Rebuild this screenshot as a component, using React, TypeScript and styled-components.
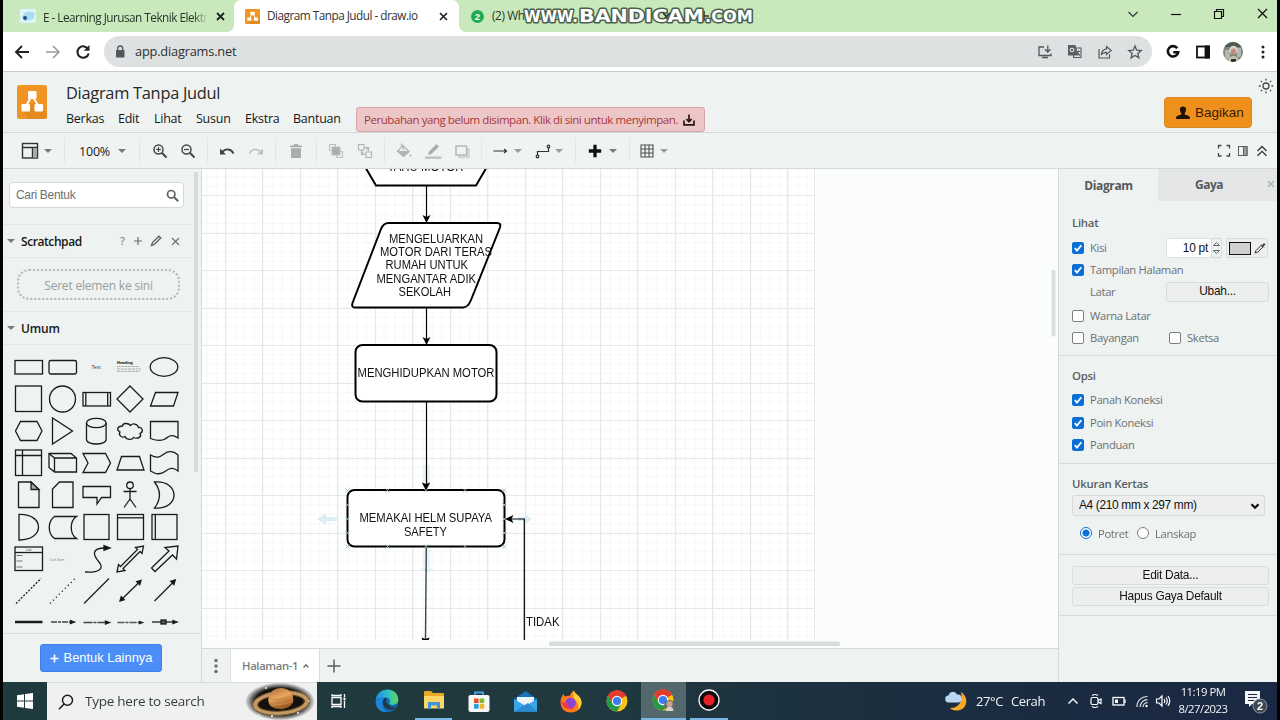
import React from 'react';
import styled, { createGlobalStyle } from 'styled-components';

const UI = `"Open Sans", "Noto Sans", sans-serif`;
const ARIAL = `"Liberation Sans", Arial, sans-serif`;

const Global = createGlobalStyle`
  * { box-sizing: border-box; }
  body { margin: 0; background: #000; overflow: hidden; font-family: ${UI}; }
  svg { display: block; flex: none; }
`;

const Screen = styled.div`
  position: relative;
  width: 1280px;
  height: 720px;
  padding: 0 3px;
  background: #000;
  display: flex;
  flex-direction: column;
  overflow: hidden;
`;

const Label = styled.span<{ $w?: number; $s?: number; $ls?: number; $c?: string; $b?: number; $g?: number; $f?: string; $mt?: number }>`
  flex: none;
  ${p => (p.$w ? `width: ${p.$w}px;` : '')}
  margin-left: ${p => p.$g ?? 0}px;
  margin-top: ${p => p.$mt ?? 0}px;
  font-family: ${p => p.$f ?? UI};
  font-size: ${p => p.$s ?? 12}px;
  letter-spacing: ${p => p.$ls ?? 0}px;
  font-weight: ${p => p.$b ?? 400};
  color: ${p => p.$c ?? '#1c1f1f'};
  white-space: nowrap;
  line-height: 1.3;
`;

const Cell = styled.div<{ $g?: number; $w?: number; $up?: number }>`
  flex: none;
  width: ${p => p.$w ?? 18}px;
  margin-left: ${p => p.$g ?? 0}px;
  margin-bottom: ${p => p.$up ?? 0}px;
  display: flex;
  align-items: center;
  justify-content: center;
`;

/* ---------- browser chrome ---------- */
const TabStrip = styled.div`
  flex: none;
  height: 32px;
  display: flex;
  background: #c9e9bd;
`;
const TabBack = styled.div<{ $w: number; $side: 'left' | 'right' }>`
  width: ${p => p.$w}px;
  background: #fff;
  > div {
    height: 32px;
    display: flex;
    align-items: center;
    background: #c9e9bd;
    border-bottom-${p => (p.$side === 'left' ? 'right' : 'left')}-radius: 7px;
  }
`;
const ActiveTab = styled.div`
  width: 225px;
  background: #c9e9bd;
  > div {
    height: 32px;
    display: flex;
    align-items: center;
    background: #fff;
    border-radius: 7px 7px 0 0;
  }
`;
const Fade = styled.div`
  width: 167px;
  margin-left: 7px;
  overflow: hidden;
  mask-image: linear-gradient(to right, #000 90%, transparent 99%);
`;
const AddressRow = styled.div`
  flex: none;
  height: 40px;
  display: flex;
  align-items: center;
  background: #fff;
  border-bottom: 1px solid #c5cccb;
`;
const Omnibox = styled.div`
  width: 1048px;
  height: 31px;
  margin-left: 12px;
  padding-right: 8px;
  border-radius: 16px;
  background: #dee1e1;
  display: flex;
  align-items: center;
`;

/* ---------- draw.io header ---------- */
const Header = styled.div`
  flex: none;
  height: 61px;
  display: flex;
  background: #eef2f1;
  border-bottom: 1px solid #d5dad9;
`;
const Logo = styled.div`
  margin: 13px 0 0 14px;
  width: 30px;
  height: 34px;
`;
const TitleBlock = styled.div`
  margin: 9px 0 0 19px;
  width: 290px;
`;
const TitleLine = styled.div`
  height: 23px;
  display: flex;
  align-items: center;
`;
const MenuLine = styled.div`
  height: 31px;
  display: flex;
  align-items: center;
`;
const SaveNotice = styled.div`
  width: 349px;
  height: 25px;
  margin-top: 35px;
  padding-left: 7px;
  display: flex;
  align-items: center;
  background: #edc6c8;
  border: 1px solid #d6a3a6;
  border-radius: 3px;
`;
const ShareButton = styled.div`
  margin: 25px 0 0 459px;
  width: 88px;
  height: 31px;
  padding: 1px 0 0 11px;
  display: flex;
  align-items: center;
  background: #f0901c;
  border: 1px solid #d88a2b;
  border-radius: 4px;
`;
const SunSlot = styled.div`
  margin: 6px 0 0 6px;
`;

const Toolbar = styled.div`
  flex: none;
  height: 36px;
  display: flex;
  align-items: center;
  background: #eff3f2;
  border-bottom: 1px solid #d3d8d7;
  padding-right: 6px;
`;
const Sep = styled.div<{ $g: number }>`
  flex: none;
  width: 1px;
  height: 25px;
  margin-left: ${p => p.$g}px;
  background: #e3e7e6;
`;
const Caret = styled.div<{ $g?: number; $c?: string }>`
  flex: none;
  margin-left: ${p => p.$g ?? 0}px;
  border: 4px solid transparent;
  border-top: 4.5px solid ${p => p.$c ?? '#777b7b'};
  border-bottom: 0;
`;
const Spacer = styled.div`
  flex: 1;
`;

/* ---------- main body ---------- */
const Body = styled.div`
  flex: none;
  height: 513px;
  display: flex;
  background: #eef2f1;
`;
const Sidebar = styled.div`
  width: 199px;
  border-right: 1px solid #d5dad9;
  display: flex;
  flex-direction: column;
`;
const SideScroll = styled.div`
  height: 465px;
  display: flex;
  border-bottom: 1px solid #d9dedd;
  overflow: hidden;
`;
const SideContent = styled.div`
  width: 188px;
`;
const SideThumb = styled.div`
  width: 4px;
  height: 300px;
  margin: 3px 0 0 3px;
  background: #d6dada;
`;
const SearchBox = styled.div`
  margin: 13px 0 0 6px;
  width: 175px;
  height: 26px;
  padding: 1px 4px 0 6px;
  display: flex;
  align-items: center;
  justify-content: space-between;
  background: #fff;
  border: 1px solid #d3d7d7;
  border-radius: 4px;
`;
const SideTitle = styled.div<{ $mt: number }>`
  height: 34px;
  margin-top: ${p => p.$mt}px;
  padding-left: 4px;
  display: flex;
  align-items: center;
  border-top: 1px solid #e3e7e6;
  border-bottom: 1px solid #e3e7e6;
`;
const DropHere = styled.div`
  margin: 11px 0 0 14px;
  width: 163px;
  height: 31px;
  padding-top: 2px;
  display: flex;
  align-items: center;
  justify-content: center;
  border: 2px dotted #b4b8b8;
  border-radius: 12px;
`;
const ShapeGrid = styled.div`
  margin: 6px 0 0 8px;
  display: grid;
  grid-template-columns: repeat(5, 34px);
  grid-auto-rows: 32px;
`;
const MoreShapes = styled.div`
  margin: 10px 0 0 37px;
  width: 122px;
  height: 28px;
  display: flex;
  align-items: center;
  justify-content: center;
  background: #4b8ef8;
  border: 1px solid #4180e2;
  border-radius: 3px;
`;

const Center = styled.div`
  width: 856px;
  display: flex;
  flex-direction: column;
`;
const CanvasArea = styled.div`
  height: 480px;
  background: #fbfcfc;
  border-bottom: 1px solid #d5dad9;
`;
const PageBar = styled.div`
  height: 33px;
  display: flex;
  align-items: center;
`;
const PageTab = styled.div`
  height: 33px;
  width: 90px;
  margin-left: 10px;
  padding-left: 11px;
  display: flex;
  align-items: center;
  background: #fff;
  border-left: 1px solid #d9dedd;
  border-right: 1px solid #d9dedd;
`;

const Panel = styled.div`
  width: 219px;
  border-left: 1px solid #d5dad9;
`;
const PanelTabs = styled.div`
  height: 32px;
  display: flex;
`;
const PanelTab = styled.div<{ $w: number; $idle?: boolean }>`
  width: ${p => p.$w}px;
  padding-top: ${p => (p.$idle ? 0 : 2)}px;
  display: flex;
  align-items: center;
  justify-content: center;
  background: ${p => (p.$idle ? '#e4e7e6' : 'transparent')};
`;
const PanelClose = styled.div`
  width: 17px;
  padding: 0 0 3px 7px;
  background: #e4e7e6;
  display: flex;
  align-items: center;
`;
const Section = styled.div<{ $h: number; $pt: number }>`
  height: ${p => p.$h}px;
  padding: ${p => p.$pt}px 0 0 13px;
  border-bottom: 1px solid #d7dcdb;
`;
const Row = styled.div<{ $h: number }>`
  height: ${p => p.$h}px;
  display: flex;
  align-items: center;
`;
const Box = styled.div<{ $on?: boolean }>`
  flex: none;
  width: 12px;
  height: 12px;
  border-radius: 2px;
  background: ${p => (p.$on ? '#0c6fd6' : '#fff')};
  border: 1px solid ${p => (p.$on ? '#0c6fd6' : '#7b7f80')};
`;
const Radio = styled.div<{ $on?: boolean; $g: number }>`
  flex: none;
  width: 12px;
  height: 12px;
  margin: 0 0 3px ${p => p.$g}px;
  border-radius: 50%;
  border: 1px solid ${p => (p.$on ? '#0c6fd6' : '#7b7f80')};
  background: ${p => (p.$on ? 'radial-gradient(#0c6fd6 0 3.2px, #fff 3.9px)' : '#fff')};
`;
const Button = styled.div<{ $w: number; $h: number; $mb?: number }>`
  flex: none;
  width: ${p => p.$w}px;
  height: ${p => p.$h}px;
  margin-bottom: ${p => p.$mb ?? 0}px;
  display: flex;
  align-items: center;
  justify-content: center;
  background: #ecefee;
  border: 1px solid #d8dcdc;
  border-radius: 3px;
`;
const NumberInput = styled.div`
  width: 46px;
  height: 20px;
  display: flex;
  align-items: center;
  justify-content: flex-end;
  padding: 1px 3px 0 0;
  background: #fff;
  border: 1px solid #dde1e0;
  border-radius: 3px;
`;
const Stepper = styled.div`
  width: 11px;
  height: 20px;
  margin: 0 4px 0 -1px;
  border: 1px solid #d8dcdc;
  border-radius: 2px;
  display: flex;
  align-items: center;
  justify-content: center;
`;
const Swatch = styled.div`
  width: 22px;
  height: 13px;
  margin-right: 3px;
  background: #cfcfcf;
  border: 1px solid #111;
`;
const Select = styled.div`
  width: 193px;
  height: 21px;
  padding: 1px 4px 0 6px;
  display: flex;
  align-items: center;
  justify-content: space-between;
  background: #ecefee;
  border: 1px solid #d6dada;
  border-radius: 3px;
`;

/* ---------- taskbar ---------- */
const Taskbar = styled.div`
  flex: none;
  height: 38px;
  display: flex;
  align-items: center;
  background: linear-gradient(to right, #1f3a3f 0, #20393f 45%, #1b2e3f 70%, #1a2843 100%);
`;
const SearchField = styled.div`
  width: 270px;
  height: 38px;
  display: flex;
  align-items: center;
  background: #eff0f0;
  border-top: 1px solid #d8dcdc;
`;
const AppSlot = styled.div<{ $w: number; $g?: number; $active?: boolean; $open?: boolean }>`
  flex: none;
  width: ${p => p.$w}px;
  height: 38px;
  margin-left: ${p => p.$g ?? 0}px;
  display: flex;
  align-items: center;
  justify-content: center;
  background: ${p => (p.$active ? '#53686d' : 'transparent')};
  border-bottom: ${p => (p.$open ? '2px solid #79b7e6' : '0')};
`;
const Clock = styled.div`
  width: 56px;
  margin-left: 3px;
  display: flex;
  flex-direction: column;
  align-items: center;
  gap: 2px;
`;
const Watermark = styled.div`
  position: absolute;
  left: 518px;
  top: 3px;
`;

const Ic = ({ w = 18, h, children, sw = 1.3, c = '#333' }: { w?: number; h?: number; children: React.ReactNode; sw?: number; c?: string }) => (
  <svg width={w} height={h ?? w} viewBox={`0 0 ${w} ${h ?? w}`} fill="none" stroke={c} strokeWidth={sw}>{children}</svg>
);

const DrawioMark = ({ w, h }: { w: number; h: number }) => (
  <svg width={w} height={h} viewBox="0 0 30 34" preserveAspectRatio="none">
    <rect width="30" height="34" rx="2.500" fill="#f09423" />
    <path d="M18 17L30 28v3.500a2.500 2.500 0 0 1-2.500 2.500H12L5 26z" fill="#dd831b" opacity="0.6" />
    <path d="M14 12L8.500 22M16 12l6 10" stroke="#fff" strokeWidth="2" />
    <rect x="11" y="6" width="8.500" height="8" rx="1.200" fill="#fff" />
    <rect x="4.500" y="19" width="8.500" height="7.500" rx="1.200" fill="#fff" />
    <rect x="17.500" y="19" width="8.500" height="7.500" rx="1.200" fill="#fff" />
  </svg>
);

const Check = ({ on }: { on?: boolean }) => (
  <Box $on={on}>
    {on && <Ic w={10} sw={1.8} c="#fff"><path d="M1.800 5.200L4 7.600 8.300 2.200" /></Ic>}
  </Box>
);

const Close = ({ w = 10, sw = 1.6, c = '#1d2420' }: { w?: number; sw?: number; c?: string }) => (
  <Ic w={w} sw={sw} c={c}><path d={`M1 1L${w - 1} ${w - 1}M${w - 1} 1L1 ${w - 1}`} /></Ic>
);

const Option = ({ children, w }: { children: string; w?: number }) => (
  <Label $g={6} $w={w} $s={11.2} $ls={-0.3} $c="#6c7071" $mt={1}>{children}</Label>
);
const Heading = ({ children }: { children: string }) => (
  <Label $s={11.4} $b={600} $ls={-0.25} $c="#5a5e5f">{children}</Label>
);
const Control = ({ children }: { children: string }) => (
  <Label $f={ARIAL} $s={11.9} $ls={-0.25} $c="#111">{children}</Label>
);

/* ---------- shape palette, each drawn in a 34 x 32 cell ---------- */
const tiny = { fontFamily: ARIAL, stroke: 'none', fill: '#444' } as const;
const shapes: React.ReactNode[] = [
  <rect x="4" y="9.500" width="27.500" height="13.500" />,
  <rect x="4" y="9.500" width="27.500" height="13.500" rx="1.800" />,
  <text x="12.500" y="18" fontSize="5" {...tiny}>Text</text>,
  <g><text x="4" y="13" fontSize="4" fontWeight="700" {...tiny} fill="#000">Heading</text><path d="M4 15.500h22M4 18h24M4 20.300h23" stroke="#999" strokeWidth="0.800" strokeDasharray="3 0.700" /></g>,
  <ellipse cx="17" cy="16" rx="13.800" ry="9.300" />,
  <rect x="4.500" y="3" width="26" height="25.500" />,
  <circle cx="17.500" cy="16" r="13" />,
  <g><rect x="4" y="9.500" width="27.500" height="13.500" /><path d="M6.800 9.500V23M28.700 9.500V23" /></g>,
  <path d="M17 3l13 13-13 13L4 16z" />,
  <path d="M8.500 9.500h22.500L26.500 23H3.500z" />,
  <path d="M9.500 6.500h16.500l5 9.500-5 9.500H9.500L4.500 16z" />,
  <path d="M7.500 3v26l20-13z" />,
  <g><ellipse cx="17.300" cy="8" rx="9.800" ry="4.700" /><path d="M7.500 8v16.500c0 6 19.600 6 19.600 0V8" /></g>,
  <path d="M9.500 11c-5 0-6.500 4-2.500 6-2 3 2 6.500 5 4.500 2 4 7.500 3.500 8.500 1 5 2 8.500-1 6.500-4 4-2 2.500-6.500-1.500-6-1-4-6-4.500-8-2-2.500-3-8-2.500-8 .5z" />,
  <path d="M3.500 6.500H31V23c-7-4.500-9-1.500-13 1s-9 1.500-14.500-.5z" />,
  <g><rect x="4.500" y="3" width="26" height="25.500" /><path d="M11.500 3v25.500M4.500 8.500h26" /></g>,
  <g><path d="M4 6.500h22l5.500 4.500v14H9.500L4 20.500zM4 6.500l5.500 4.500h22M9.500 11v14" /></g>,
  <path d="M4 6.500h22.500l5 9.500-5 9.500H4L9 16z" />,
  <path d="M8.500 9.500h18L31 23H4z" />,
  <path d="M3.500 8c6 3.500 9 2.500 13.500-1S27 4 31 8v16c-5-4-8.500-3-13 .500s-9 3-14.500-.5z" />,
  <g><path d="M7.500 3H20l8 7.500v18H7.500z" /><path d="M20 3v7.500h8z" fill="#aaa" /></g>,
  <path d="M14.500 3H28v25.500H7.500V10z" />,
  <path d="M4 7.500h27.500v11H22.500L18 25v-6.500H4z" />,
  <g><circle cx="17" cy="6.300" r="3.300" /><path d="M17 9.500V20M10.500 12.500h13M17 20l-6 8.500M17 20l6 8.500" /></g>,
  <path d="M7.500 3c26-2 26 28 0 26 6.500-8.500 6.500-17.500 0-26z" />,
  <path d="M8 3.500c26-1 26 26 0 25.500z" />,
  <path d="M9.500 5.500h22c-7 4.500-7 17.500 0 22h-22c-7-5-7-17 0-22z" />,
  <rect x="5" y="3.500" width="25" height="25" />,
  <g><rect x="4.500" y="3.500" width="26" height="25" /><path d="M4.500 6.800h26" /></g>,
  <g><rect x="5" y="3.500" width="25" height="25" /><path d="M8.300 3.500v25" /></g>,
  <g><rect x="4" y="4" width="27.500" height="23.500" /><path d="M4 9.500h27.500" /><text x="15" y="8" fontSize="3.500" {...tiny}>List</text><path d="M5.500 12.500h6M5.500 18h6M5.500 24h6" stroke="#777" strokeWidth="1" /></g>,
  <text x="5" y="17.500" fontSize="3.800" {...tiny} fill="#888">List Item</text>,
  <g><path d="M6 29c13 1 20-3 14-10s-8-14 6-14" /><path d="M25 2.700l6 2.300-6 2.300z" fill="#111" /></g>,
  <path d="M4 29l1.500-7.500 2 2L24.500 6.500l-2-2L30.500 3 29 10.500l-2-2L10 25.500l2 2z" />,
  <path d="M4.500 25L22 8l-4-3.500L31 3l-1.500 13-4-4L8 28.500z" />,
  <path d="M5 28.500L30 3.500" strokeDasharray="2 1.500" />,
  <path d="M5 28.500L30 3.500" strokeDasharray="1.200 3" />,
  <path d="M5 28.500L30 3.500" />,
  <g><path d="M8 25L27 6.500" /><path d="M7 26l1.200-4.300 3 3zM28 5.500l-4.300 1.200 3 3z" fill="#111" /></g>,
  <g><path d="M7.500 26L27 6.500" /><path d="M28.300 5l-4.600 1.300 3.200 3.200z" fill="#111" /></g>,
  <path d="M4 15h27.500" strokeWidth="2.500" />,
  <g><path d="M6 15h22" strokeDasharray="6 1 3 1" strokeWidth="1.300" stroke="#444" /><path d="M25.500 13.500l4 1.500-4 1.500z" fill="#111" /></g>,
  <g><path d="M4.500 15.500h24" strokeDasharray="9 1 3 1" strokeWidth="1.300" stroke="#444" /><path d="M26.500 14l4 1.500-4 1.500z" fill="#111" /></g>,
  <g><path d="M4.500 15.500h24" strokeDasharray="7 1 3 1" strokeWidth="1.300" stroke="#555" /><path d="M26.500 14.500l3 1-3 1z" fill="#111" /></g>,
  <g><path d="M5 15h23" strokeWidth="1.300" /><path d="M26 13.500l4 1.500-4 1.500z" fill="#111" /><rect x="14" y="13" width="5" height="4" fill="#555" /></g>,
];

/* ---------- diagram canvas, in screen coordinates through its viewBox ---------- */
const seq = (from: number, to: number, step: number) => {
  const out: number[] = [];
  for (let v = from; v < to; v += step) out.push(v);
  return out;
};
const nodeText: [string, number, number, number][] = [
  ['TAHU MOTOR', 387.5, 171, 76],
  ['MENGELUARKAN', 389, 243, 94],
  ['MOTOR DARI TERAS', 380, 256, 112],
  ['RUMAH UNTUK', 385.500, 269.300, 82.500],
  ['MENGANTAR ADIK', 376.500, 283, 99.500],
  ['SEKOLAH', 398.500, 296.300, 52.500],
  ['MENGHIDUPKAN MOTOR', 357.500, 377, 137],
  ['MEMAKAI HELM SUPAYA', 359.500, 522.300, 132.500],
  ['SAFETY', 404, 536, 43],
  ['TIDAK', 526, 625.500, 33.500],
];
const points: [number, number][] = [
  [347.500, 490.500], [387.500, 490.500], [426, 490.500], [465, 490.500], [504, 490.500],
  [347.500, 505], [347.500, 519], [347.500, 533], [504, 505], [504, 519], [504, 533],
  [347.500, 546.500], [387.500, 546.500], [426, 546.500], [465, 546.500], [504, 546.500],
];
const Canvas = () => (
  <svg width="856" height="479" viewBox="202 169 856 479">
    <defs>
      <clipPath id="sheet"><rect x="202" y="169" width="856" height="470.500" /></clipPath>
    </defs>
    <g clipPath="url(#sheet)">
      <rect x="202" y="169" width="613" height="471" fill="#fff" />
      <g stroke="#f6f7f7" strokeWidth="1">
        {seq(207.250, 815, 9.375).map(x => <path key={x} d={`M${x} 169V640`} />)}
        {seq(176.750, 640, 9.375).map(y => <path key={y} d={`M202 ${y}H815`} />)}
      </g>
      <g stroke="#e6e8e9" strokeWidth="1">
        {seq(226, 800, 37.500).map(x => <path key={x} d={`M${Math.floor(x) - 0.5} 169V640`} />)}
        {seq(195.500, 640, 37.500).map(y => <path key={y} d={`M202 ${Math.floor(y) + 0.5}H815`} />)}
        <path d="M814.500 169V640" />
      </g>
      <g fill="#cfe8f3" opacity="0.75">
        <path d="M317 519l9-6v4h11v4h-11v4zM532 519l-7-5v3h-7v4h7v3z" />
        <path d="M423 465h7v22h-7zM423 550h7v18h3l-6 6-6-6h2z" opacity="0.600" />
      </g>
      <g fill="#fff" stroke="#000" strokeWidth="2">
        <path d="M364 165l12 20.500h100L488 165z" />
        <path d="M388.500 223H497q4.500 0 3 4.500L471 300q-3 7.500-8 7.500H355q-4 0-2.500-4.500L381 229q2.500-6 7.500-6z" />
        <rect x="355.500" y="345" width="141" height="56.500" rx="7" />
        <rect x="347.500" y="490" width="157" height="56.500" rx="7" />
      </g>
      <g fill="none" stroke="#000" strokeWidth="1">
        <path d="M426.500 186v32M426.500 308v31M426.500 402v83M524.300 640V519H510" strokeWidth="1.200" />
        <path d="M426.300 547L425.500 640" stroke="#33494a" strokeWidth="1.400" />
      </g>
      <g fill="#000">
        <path d="M426.500 223l-4-8 4 2 4-2zM426.500 345l-4-8 4 2 4-2zM426 490.500l-4.200-8 4.200 1.500 4.200-1.500zM505 519l8.500-4-2 4 2 4zM421.500 637.500l4 1.500 4-1.500-1 3h-6z" />
      </g>
      <g stroke="#9dbfc3" strokeWidth="0.900">
        {points.map(([x, y]) => <path key={`${x}-${y}`} d={`M${x - 2} ${y - 2}l4 4M${x + 2} ${y - 2}l-4 4`} />)}
      </g>
      <g fontFamily={ARIAL} fontSize="11.900" fill="#111">
        {nodeText.map(([t, x, y, w]) => <text key={t} x={x} y={y} textLength={w} lengthAdjust="spacingAndGlyphs">{t}</text>)}
      </g>
    </g>
    <rect x="549" y="641.500" width="291" height="4.500" rx="1.500" fill="#dadddd" />
    <rect x="1051.500" y="270" width="4" height="66.500" rx="1.500" fill="#dcdfdf" />
  </svg>
);

const ChromeLogo = () => (
  <svg width="22" height="22" viewBox="-11 -11 22 22">
    <circle r="10.500" fill="#fbc116" />
    <path d="M0 0L-9.100-5.200A10.500 10.500 0 0 1 9.100-5.200z" fill="#e33b2e" />
    <path d="M0-5.200H9.100A10.500 10.500 0 0 0-9.100-5.200L-4.500 2.600z" fill="#e33b2e" />
    <path d="M-9.100-5.200A10.500 10.500 0 0 0 0 10.500L4.500 2.600-4.500 2.600z" fill="#249a48" />
    <circle r="5.200" fill="#fff" />
    <circle r="4.100" fill="#3b7ded" />
  </svg>
);

const Saturn = () => (
  <svg width="70" height="37" viewBox="0 0 70 37">
    <defs>
      <radialGradient id="halo"><stop offset="0.700" stopColor="#14110e" /><stop offset="1" stopColor="#14110e" stopOpacity="0" /></radialGradient>
      <linearGradient id="globe" x1="0" y1="0" x2="0.300" y2="1"><stop offset="0" stopColor="#a96a35" /><stop offset="0.500" stopColor="#e9a65c" /><stop offset="1" stopColor="#9a5a28" /></linearGradient>
    </defs>
    <ellipse cx="35" cy="18.500" rx="35" ry="19" fill="url(#halo)" />
    <g transform="rotate(-5 36 19)">
      <ellipse cx="36" cy="20" rx="26" ry="10" fill="none" stroke="#c29a63" strokeWidth="4.500" />
      <ellipse cx="36" cy="20" rx="28.500" ry="12" fill="none" stroke="#7b5c38" strokeWidth="1" />
      <ellipse cx="36" cy="20" rx="23" ry="8" fill="none" stroke="#59401f" strokeWidth="1" />
      <path d="M23.500 17c0-16 25-16 25 0 0 12-25 12-25 0z" fill="url(#globe)" />
      <path d="M23.500 14c8 3 17 3 25 0M24.500 19c7 3 16 3 23.500 0" stroke="#c98446" fill="none" />
    </g>
    <g fill="#fff"><circle cx="21" cy="5" r="0.900" /><circle cx="14" cy="32" r="0.800" /><circle cx="27" cy="33" r="1" /><circle cx="53" cy="30" r="0.900" /><circle cx="64" cy="18" r="0.700" /></g>
  </svg>
);

const Lens = ({ plus }: { plus: boolean }) => (
  <Ic sw={1.5} c="#444848"><circle cx="7.500" cy="7.500" r="4.500" /><path d="M10.800 10.800L15.500 15.500" strokeWidth="2" /><path d={plus ? 'M5 7.500h5M7.500 5v5' : 'M5 7.500h5'} strokeWidth="1.200" /></Ic>
);

const menus: [string, number][] = [['Berkas', 52], ['Edit', 36], ['Lihat', 42], ['Susun', 49], ['Ekstra', 48], ['Bantuan', 50]];

export default function App() {
  return (
    <Screen>
      <Global />
      <TabStrip>
        <TabBack $w={231} $side="left"><div>
          <Cell $g={17} $w={16}><svg width="16" height="14" viewBox="0 0 16 14"><rect width="16" height="14" rx="1" fill="#dff3fa" /><path d="M2 8c3-6 9-7 13-3l-2 5-8 2z" fill="#a9dcee" /><circle cx="5" cy="9" r="2" fill="#20508c" /></svg></Cell>
          <Fade><Label $s={11.8} $ls={-0.53} $c="#26352a">E - Learning Jurusan Teknik Elektro</Label></Fade>
          <Cell $g={2} $w={16}><Close w={9} sw={1.8} /></Cell>
        </div></TabBack>
        <ActiveTab><div>
          <Cell $g={10} $w={16}><DrawioMark w={15} h={15} /></Cell>
          <Label $g={7} $w={168} $s={11.8} $ls={-0.52} $c="#333">Diagram Tanpa Judul - draw.io</Label>
          <Cell $g={0} $w={16}><Close w={9} /></Cell>
        </div></ActiveTab>
        <TabBack $w={818} $side="right"><div>
          <Cell $g={12} $w={12}><svg width="13" height="13" viewBox="0 0 13 13"><circle cx="6.500" cy="6.500" r="6.500" fill="#1faa52" /><text x="6.500" y="10" textAnchor="middle" fontFamily={ARIAL} fontSize="9.500" fontWeight="700" fill="#fff">2</text></svg></Cell>
          <Label $g={9} $w={74} $s={11.8} $ls={-0.4} $c="#26352a">(2) WhatsApp</Label>
          <Cell $g={94} $w={12}><Close w={9} /></Cell>
          <Cell $g={24} $w={16}><Ic w={12} sw={1.6}><path d="M6 1v10M1 6h10" /></Ic></Cell>
          <Cell $g={414} $w={14} $up={5}><Ic w={12} sw={1.2}><path d="M1.500 4L6 8.500 10.500 4" /></Ic></Cell>
          <Cell $g={29} $w={14} $up={5}><Ic w={12} sw={1.2} c="#111"><path d="M1 6.500h10" /></Ic></Cell>
          <Cell $g={29} $w={14} $up={5}><Ic w={12} sw={1.2} c="#111"><path d="M1.500 3.500h7v7h-7zM3.500 3.500v-2h7v7h-2" /></Ic></Cell>
          <Cell $g={29} $w={14} $up={5}><Close w={11} sw={1.3} c="#111" /></Cell>
        </div></TabBack>
      </TabStrip>

      <AddressRow>
        <Cell $g={10}><Ic w={16} sw={1.9} c="#1f2222"><path d="M15 8H2M8 2L2 8l6 6" /></Ic></Cell>
        <Cell $g={13}><Ic w={16} sw={1.5} c="#979b9b"><path d="M1 8h13M8 2l6 6-6 6" /></Ic></Cell>
        <Cell $g={12}><Ic w={16} sw={2.1} c="#1f2222"><path d="M13.300 5.500A5.700 5.700 0 1 0 13.700 9.500" /><path d="M14.500 1v5.800H8.800z" fill="#1f2222" stroke="none" /></Ic></Cell>
        <Omnibox>
          <Cell $g={7}><svg width="12" height="14" viewBox="0 0 12 14"><rect x="2" y="5" width="8.500" height="7.500" rx="0.800" fill="#53575a" /><path d="M3.700 5V3.500a2.500 2.500 0 0 1 5 0V5" fill="none" stroke="#53575a" strokeWidth="1.300" /></svg></Cell>
          <Label $g={6} $s={12.8} $ls={-0.2} $c="#2c3031">app.diagrams.net</Label>
          <Spacer />
          <Cell><Ic w={16} c="#54585a"><path d="M7 3H2v8.500h12V9.500M5 13.500h6" /><path d="M10.800 1.500v6M8 5.300l2.800 2.700 2.700-2.700" /></Ic></Cell>
          <Cell $g={12}><Ic w={16} c="#5b5f61" sw={1.1}><rect x="6.500" y="4" width="7.500" height="9.500" /><path d="M1.500 1.500h6.500l2.500 9.500h-9z" fill="#5b5f61" /><circle cx="5" cy="6" r="1.800" stroke="#dee1e1" /><path d="M9.500 7.500h4M11.500 6.500c0 2-1 3-2 4M10 8.500l3 3" /></Ic></Cell>
          <Cell $g={12}><Ic w={16} c="#54585a" sw={1.2}><path d="M2 5v9h10.500v-3.500" /><path d="M9.500 2.500l4.700 4-4.700 4V8.300C7 8.300 5.500 9 4.200 11c.3-3.500 2.300-5.800 5.300-6.200z" /></Ic></Cell>
          <Cell $g={12}><Ic w={16} c="#54585a" sw={1.300}><path d="M8 2l1.700 4.200 4.500.3-3.400 2.900 1.100 4.400L8 11.400l-3.900 2.400 1.100-4.400L1.800 6.500l4.500-.3z" /></Ic></Cell>
        </Omnibox>
        <Cell $g={12}><Ic w={16} sw={2.6} c="#111"><path d="M12.300 4.300A5.200 5.200 0 1 0 13.200 8.200H8.300" /></Ic></Cell>
        <Cell $g={12}><Ic w={16} sw={1.8} c="#111"><rect x="2" y="2.500" width="12" height="11" /><path d="M10.500 2.500h3.500v11h-3.500z" fill="#111" /></Ic></Cell>
        <Cell $g={10} $w={22}><svg width="20" height="20" viewBox="0 0 20 20"><clipPath id="face"><circle cx="10" cy="10" r="10" /></clipPath><g clipPath="url(#face)"><rect width="20" height="20" fill="#7d857a" /><path d="M0 0h20v5H0z" fill="#4d5a50" /><path d="M2 8h5v9H2zM14 6h4v9h-4z" fill="#b2b8b0" /><circle cx="10.500" cy="8" r="4.200" fill="#dcd3ca" /><ellipse cx="10.500" cy="9.500" rx="2.600" ry="3" fill="#c08f7c" /><path d="M5 20c0-8 11-8 11 0z" fill="#c9bfb4" /><path d="M8 17h5v3H8z" fill="#2c2c2a" /></g></svg></Cell>
        <Cell $g={10}><svg width="4" height="14" viewBox="0 0 4 14" fill="#222"><circle cx="2" cy="2" r="1.500" /><circle cx="2" cy="7" r="1.500" /><circle cx="2" cy="12" r="1.500" /></svg></Cell>
      </AddressRow>

      <Header>
        <Logo><DrawioMark w={30} h={34} /></Logo>
        <TitleBlock>
          <TitleLine><Label $s={16.4} $ls={-0.28} $c="#262929">Diagram Tanpa Judul</Label></TitleLine>
          <MenuLine>{menus.map(([m, w]) => <Label key={m} $w={w} $s={12.5} $ls={-0.25} $c="#161818">{m}</Label>)}</MenuLine>
        </TitleBlock>
        <SaveNotice>
          <Label $w={319} $s={11.5} $ls={-0.44} $c="#a5393c" $mt={1}>Perubahan yang belum disimpan. Klik di sini untuk menyimpan.</Label>
          <Ic w={12} sw={1.7} c="#2b1516"><path d="M1 6.500v4.300h10V6.500M6 .5v7M3.300 5L6 7.700 8.700 5" /></Ic>
        </SaveNotice>
        <ShareButton>
          <svg width="14" height="14" viewBox="0 0 14 14"><path d="M7 .5c4 0 3.500 4.500 1.800 6.500v1.500l4.200 1.500q1 .5 1 3H0q0-2.500 1-3l4.200-1.500V7C3.500 5 3 .5 7 .5z" fill="#1d1206" /></svg>
          <Label $g={5} $f={ARIAL} $s={13.5} $c="#3a1c02">Bagikan</Label>
        </ShareButton>
        <SunSlot><Ic w={16} c="#444848" sw={1.300}><circle cx="8" cy="8" r="3" /><path d="M8 .8v1.800M8 13.400v1.800M.8 8h1.800M13.400 8h1.800M2.900 2.900l1.200 1.200M11.900 11.900l1.200 1.200M2.900 13.100l1.200-1.200M11.900 4.100l1.200-1.200" /></Ic></SunSlot>
      </Header>

      <Toolbar>
        <Cell $g={18}><Ic sw={1.4} c="#333"><rect x="1.500" y="1.500" width="15" height="14.500" /><path d="M1.500 5.500h15M11.500 5.500V16" /><path d="M12 6h4v9.500h-4z" fill="#aaa" stroke="none" /></Ic></Cell>
        <Caret $g={5} /><Sep $g={12} />
        <Label $g={14} $w={32} $s={12.5} $ls={-0.2} $c="#222" $mt={3}>100%</Label>
        <Caret $g={7} /><Sep $g={13} />
        <Cell $g={11}><Lens plus /></Cell>
        <Cell $g={10}><Lens plus={false} /></Cell>
        <Sep $g={10} />
        <Cell $g={10}><Ic sw={1.8} c="#3f4343"><path d="M4.500 9.500C8 6.500 13 6.500 15.500 11.500" /><path d="M2 6.500v6h6z" fill="#3f4343" stroke="none" /></Ic></Cell>
        <Cell $g={11}><Ic sw={1.6} c="#bcc0c0"><path d="M13.500 9.500C10 6.500 5 6.500 2.500 11.500" /><path d="M16 6.500v6h-6z" fill="#bcc0c0" stroke="none" /></Ic></Cell>
        <Sep $g={10} />
        <Cell $g={11}><Ic sw={0}><path d="M3 3.500h3.500l1-1.500h3l1 1.500H15v1.800H3zM4 6.300h10V16H4z" fill="#a9adad" /></Ic></Cell>
        <Sep $g={11} />
        <Cell $g={10}><Ic c="#bcc0c0" sw={1.1}><path d="M2.500 2.500h6v2M2.500 2.500v6h2M9.500 15.500h6v-6h-2M9.500 15.500v-2" /><rect x="5" y="5" width="8" height="8" fill="#a9adad" /></Ic></Cell>
        <Cell $g={11}><Ic c="#b0b4b4" sw={1.1}><path d="M8 5.500h4.500V9M5.500 8v4.500H9" fill="#c0c4c4" /><rect x="2.500" y="2.500" width="5.500" height="5.500" fill="#eff3f2" /><rect x="10" y="10" width="5.500" height="5.500" fill="#eff3f2" /></Ic></Cell>
        <Sep $g={10} />
        <Cell $g={10}><Ic c="#b0b4b4" sw={1.2}><path d="M8 3.500l6 6-5.500 5-6-5.500z" /><path d="M3 9.500h10.500l-5 4.700z" fill="#b0b4b4" /><path d="M9 8L6 1.500" /><circle cx="15.500" cy="13.500" r="1" fill="#b0b4b4" stroke="none" /></Ic></Cell>
        <Cell $g={11}><Ic sw={0}><path d="M1 14.500h16.500v2.300H1z" fill="#bcc0c0" /><path d="M4 13l1-3.500L12.500 2l2.500 2.500L7.500 12z" fill="#a9adad" /></Ic></Cell>
        <Cell $g={11}><Ic c="#b4b8b8" sw={1.5}><path d="M5 15h10.500V6" stroke="#d0d4d4" strokeWidth="2.500" /><rect x="3" y="4" width="10.500" height="9" fill="#eff3f2" /></Ic></Cell>
        <Sep $g={10} />
        <Cell $g={10}><Ic sw={1.2}><path d="M1.500 9h13M12 7L14.500 9l-2.500 2" /></Ic></Cell>
        <Caret $g={4} $c="#979b9b" />
        <Cell $g={12}><Ic sw={1.2}><path d="M3.500 13V9.500H14.500V6" /><circle cx="3.500" cy="14.500" r="1.300" /><circle cx="14.500" cy="4.500" r="1.300" /></Ic></Cell>
        <Caret $g={3} $c="#979b9b" /><Sep $g={12} />
        <Cell $g={10}><Ic sw={3.300} c="#111"><path d="M9 2.800v12.400M2.800 9h12.400" /></Ic></Cell>
        <Caret $g={5} /><Sep $g={12} />
        <Cell $g={8}><Ic sw={1.100} c="#4b4f4f"><path d="M3 3h12v12H3zM3 7h12M3 11h12M7 3v12M11 3v12" /></Ic></Cell>
        <Caret $g={4} $c="#979b9b" />
        <Spacer />
        <Cell><Ic w={14} sw={1.300} c="#444848"><path d="M1.500 4.500v-3h3M9.500 1.500h3v3M12.500 9v3h-3M4.500 12h-3V9" /></Ic></Cell>
        <Cell $g={1}><Ic w={12} sw={1} c="#5b5f5f"><rect x="1.500" y="1.500" width="8.500" height="9" /><path d="M6.500 1.500H10v9H6.500z" fill="#9a9e9e" /></Ic></Cell>
        <Cell $g={1}><Ic w={12} sw={1.300}><path d="M1.500 6L6 1.500 10.500 6M1.500 10.800L6 6.300l4.500 4.500" /></Ic></Cell>
      </Toolbar>

      <Body>
        <Sidebar>
          <SideScroll>
            <SideContent>
              <SearchBox>
                <Label $f={ARIAL} $s={12} $ls={-0.3} $c="#6d7171">Cari Bentuk</Label>
                <Ic w={13} sw={1.700} c="#5d6161"><circle cx="5.200" cy="5.200" r="3.700" /><path d="M8 8l4.200 4.200" strokeWidth="2" /></Ic>
              </SearchBox>
              <SideTitle $mt={16}>
                <Caret />
                <Label $g={6} $w={102} $s={12} $ls={-0.42} $b={600} $c="#151717" $mt={1}>Scratchpad</Label>
                <Label $w={8} $s={11} $g={-3} $c="#8b8f8f" $b={600}>?</Label>
                <Cell $g={4} $w={12}><Ic w={10} sw={1.200} c="#6b6f6f"><path d="M5 1v8M1 5h8" /></Ic></Cell>
                <Cell $g={6} $w={12}><Ic w={12} sw={1.300} c="#5b5f5f"><path d="M1.500 10.500l1-3L9 1.200l1.800 1.800-6.500 6.500z" /></Ic></Cell>
                <Cell $g={7} $w={12}><Close w={9} sw={1.100} c="#6b6f6f" /></Cell>
              </SideTitle>
              <DropHere><Label $s={12} $ls={-0.2} $c="#9a9e9e">Seret elemen ke sini</Label></DropHere>
              <SideTitle $mt={11}>
                <Caret />
                <Label $g={6} $s={12} $b={600} $ls={-0.2} $c="#151717" $mt={2}>Umum</Label>
              </SideTitle>
              <ShapeGrid>
                {shapes.map((s, i) => (
                  <svg key={i} width="34" height="32" viewBox="0 0 34 32" fill="none" stroke="#1a1c1c" strokeWidth="1.300">{s}</svg>
                ))}
              </ShapeGrid>
            </SideContent>
            <SideThumb />
          </SideScroll>
          <MoreShapes>
            <Ic w={9} sw={1.600} c="#fff"><path d="M4.500 .5v8M.5 4.500h8" /></Ic>
            <Label $g={5} $f={ARIAL} $s={12.900} $c="#fff">Bentuk Lainnya</Label>
          </MoreShapes>
        </Sidebar>

        <Center>
          <CanvasArea><Canvas /></CanvasArea>
          <PageBar>
            <Cell $g={10} $w={8}><svg width="4" height="16" viewBox="0 0 4 16" fill="#6a6e6e"><circle cx="2" cy="2.500" r="1.700" /><circle cx="2" cy="8" r="1.700" /><circle cx="2" cy="13.500" r="1.700" /></svg></Cell>
            <PageTab>
              <Label $w={60} $s={11.300} $b={600} $ls={-0.35} $c="#7b7f7f" $mt={1}>Halaman-1</Label>
              <Ic w={8} sw={1.400} c="#6b6f6f"><path d="M1.500 5.500L4 2.800l2.500 2.700" /></Ic>
            </PageTab>
            <Cell $g={5}><Ic w={14} sw={1.500} c="#5b5f5f"><path d="M7 .5v13M.5 7h13" /></Ic></Cell>
          </PageBar>
        </Center>

        <Panel>
          <PanelTabs>
            <PanelTab $w={99}><Label $s={12} $b={700} $ls={-0.35} $c="#55595a">Diagram</Label></PanelTab>
            <PanelTab $w={102} $idle><Label $s={12} $b={700} $ls={-0.5} $c="#55595a">Gaya</Label></PanelTab>
            <PanelClose><Close w={8} sw={1.300} c="#a3b3bc" /></PanelClose>
          </PanelTabs>
          <Section $h={155} $pt={11}>
            <Row $h={22}><Heading>Lihat</Heading></Row>
            <Row $h={28}>
              <Check on /><Option w={76}>Kisi</Option>
              <NumberInput><Control>10 pt</Control></NumberInput>
              <Stepper><Ic w={9} h={14} sw={0.900} c="#555"><path d="M1.500 4.500l3-3 3 3zM1.500 9.500l3 3 3-3z" /></Ic></Stepper>
              <Button $w={42} $h={20}><Swatch /><Ic w={12} sw={1} c="#333"><path d="M1 11l1-2.500L7 3.500l1.700 1.700-5 5z" /><path d="M7 2.500l3 3M8 4l2-2.500 1 1L8.500 4.500z" fill="#333" /></Ic></Button>
            </Row>
            <Row $h={16}><Check on /><Option>Tampilan Halaman</Option></Row>
            <Row $h={27}>
              <Label $g={18} $w={76} $s={11.200} $ls={-0.3} $c="#6c7071" $mt={2}>Latar</Label>
              <Button $w={103} $h={20}><Control>Ubah...</Control></Button>
            </Row>
            <Row $h={21}><Check /><Option>Warna Latar</Option></Row>
            <Row $h={23}><Check /><Option w={79}>Bayangan</Option><Check /><Option>Sketsa</Option></Row>
          </Section>
          <Section $h={108} $pt={9}>
            <Row $h={22}><Heading>Opsi</Heading></Row>
            <Row $h={26}><Check on /><Option>Panah Koneksi</Option></Row>
            <Row $h={19}><Check on /><Option>Poin Koneksi</Option></Row>
            <Row $h={26}><Check on /><Option>Panduan</Option></Row>
          </Section>
          <Section $h={91} $pt={9}>
            <Row $h={22}><Heading>Ukuran Kertas</Heading></Row>
            <Select><Label $f={ARIAL} $s={11.9} $ls={-0.33} $c="#111">A4 (210 mm x 297 mm)</Label><Ic w={10} sw={2.200} c="#111"><path d="M1.500 3.200L5 6.700l3.500-3.500" /></Ic></Select>
            <Row $h={36}><Radio $on $g={8} /><Option w={31}>Potret</Option><Radio $g={8} /><Option>Lanskap</Option></Row>
          </Section>
          <Section $h={61} $pt={11}>
            <Button $w={197} $h={19} $mb={2}><Control>Edit Data...</Control></Button>
            <Button $w={197} $h={19}><Control>Hapus Gaya Default</Control></Button>
          </Section>
        </Panel>
      </Body>

      <Taskbar>
        <AppSlot $w={44}><svg width="16" height="16" viewBox="0 0 16 16" fill="#fff"><path d="M0 2.300l7-1v6.300H0zM8 1.100L16 0v7.600H8zM0 8.500h7v6.200l-7-1zM8 8.500h8V16l-8-1.100z" /></svg></AppSlot>
        <SearchField>
          <Cell $g={10}><Ic w={16} sw={1.500} c="#1c1c1c"><circle cx="9.500" cy="6.300" r="5" /><path d="M6 10L1 15.200" /></Ic></Cell>
          <Label $g={10} $w={160} $s={13.500} $ls={-0.25} $c="#3a3d3e" $mt={1}>Type here to search</Label>
          <Saturn />
        </SearchField>
        <AppSlot $w={24} $g={10}><Ic w={16} sw={1.300} c="#fff"><path d="M1 4.500h9v7H1zM1 1v1.500h9V1M1 15v-1.500h9V15M13.500 1v3M13.500 7.500V15" /><rect x="12.500" y="4.500" width="2" height="2.500" fill="#fff" stroke="none" /></Ic></AppSlot>
        <AppSlot $w={24} $g={24}>
          <svg width="24" height="24" viewBox="0 0 24 24">
            <defs><linearGradient id="edge" x1="0" y1="0.300" x2="1" y2="0.300"><stop offset="0" stopColor="#1f8fe0" /><stop offset="0.550" stopColor="#2cc0c8" /><stop offset="1" stopColor="#67d64f" /></linearGradient></defs>
            <circle cx="12" cy="12" r="11.300" fill="#1269b8" />
            <path d="M.8 11C2-3 23-3 23.300 10.500c0 6-8.300 6.500-8.800 4 2-4-1.500-6.500-4.500-6C6 8.500 2 9 .8 11z" fill="url(#edge)" />
            <path d="M10 9c-4 3-2 10.500 4 11.500 3 .5 6-.5 7.800-2.500-2.500 1-6 .3-7.500-2C11 14 10 12 12 9.300z" fill="#20393f" />
            <path d="M9 9.500c-3 4-2 10 3 13.500C4 24 0 17 .8 11 2.500 8.500 6 8 9 9.500z" fill="#1c86d6" />
          </svg>
        </AppSlot>
        <AppSlot $w={37} $g={16} $open>
          <svg width="22" height="20" viewBox="0 0 22 20"><path d="M1 2q0-1 1-1h6l2 2h10q1 0 1 1v14H1z" fill="#e9a928" /><path d="M1 6h20v12.500H1z" fill="#fbd765" /><path d="M5 12h12v7h-3v-3.500H8V19H5z" fill="#3f97d9" /></svg>
        </AppSlot>
        <AppSlot $w={24} $g={15}>
          <svg width="22" height="23" viewBox="0 0 22 23"><path d="M7 6V2.500h8V6" fill="none" stroke="#46a7e6" strokeWidth="1.800" /><rect x="0.500" y="5" width="21" height="17" rx="2" fill="#f4f6f7" /><path d="M6 8.500h4.600v4.600H6z" fill="#e8532c" /><path d="M11.600 8.500h4.600v4.600h-4.600z" fill="#7fb928" /><path d="M6 14.100h4.600v4.600H6z" fill="#1c9fe4" /><path d="M11.600 14.100h4.600v4.600h-4.600z" fill="#f6b51c" /></svg>
        </AppSlot>
        <AppSlot $w={24} $g={22}>
          <svg width="23" height="21" viewBox="0 0 23 21"><path d="M0 8L11.500 0 23 8v12.500H0z" fill="#1672bf" /><path d="M3 6h17v8H3z" fill="#e9f4fb" /><path d="M0 8l11.500 7L23 8v12.500H0z" fill="#3aa6ea" /><path d="M0 20.500L14 12l9 8.500z" fill="#2b8ad2" /></svg>
        </AppSlot>
        <AppSlot $w={24} $g={22}>
          <svg width="22" height="23" viewBox="0 0 22 23"><path d="M11 22.500C4 22.500.5 18 .5 12c0-4 2-6.500 3-8.500 0 1.500.5 2.500 1.500 3 1.500-1 3-1 4.500-.5C11 4 11 2 14 .5c0 3.500 7.500 5 7.500 12 0 6-4.500 10-10.500 10z" fill="#ff7a1c" /><path d="M14 .5c0 3.500 7.500 5 7.500 12 0 3-1.500 6-3.500 7.500 1-4 0-8-3-10.500-2-2-2.500-5-1-9z" fill="#ffcd35" /><circle cx="10.500" cy="13" r="5.300" fill="#8a45d8" /><path d="M.7 10c2 4 5 2 8 3.500-2 3 1 5 5.500 4-2 3-12 3-13.500-7.500z" fill="#f2394a" /></svg>
        </AppSlot>
        <AppSlot $w={24} $g={22}><ChromeLogo /></AppSlot>
        <AppSlot $w={45} $g={12} $active $open>
          <svg width="26" height="26" viewBox="0 0 26 26"><g transform="translate(1 2)"><ChromeLogo /></g><ellipse cx="18.500" cy="19" rx="5.500" ry="6" fill="#6d6a64" /><circle cx="18.500" cy="17" r="3" fill="#c9a48f" /><path d="M14.500 24c0-6 8-6 8 0z" fill="#d8d4cc" /></svg>
        </AppSlot>
        <AppSlot $w={38} $g={4} $open>
          <svg width="22" height="22" viewBox="0 0 22 22"><circle cx="11" cy="11" r="10" fill="#0b0b0b" stroke="#f4f4f4" strokeWidth="1.300" /><circle cx="11" cy="11" r="5.600" fill="#e8202a" /></svg>
        </AppSlot>
        <Spacer />
        <Cell $w={24}>
          <svg width="24" height="24" viewBox="0 0 24 24"><path d="M16 3c8 5 7 17-3 18.500-3 .3-6-.5-8-2.500C15 19 18 11 16 3z" fill="#f7a925" /><path d="M4 13.500a3.500 3.500 0 0 1-.5-7A4.500 4.500 0 0 1 12 5.500a4 4 0 0 1 1.500 8z" fill="#b9d7f4" /></svg>
        </Cell>
        <Label $g={7} $w={35} $s={13} $ls={-0.4} $c="#f2f4f5">27°C</Label>
        <Label $w={34} $s={13} $ls={-0.4} $c="#f2f4f5">Cerah</Label>
        <Cell $g={19}><Ic w={12} sw={1.400} c="#fff"><path d="M1.500 8.500L6 4l4.500 4.500" /></Ic></Cell>
        <Cell $g={5}><Ic w={14} h={16} sw={1.200} c="#fff"><rect x="2" y="4.500" width="7" height="7" rx="1.500" /><path d="M9 7.500l3-1.500v4.500L9 9M3 2.500q3-2 6 0M3 13.500q3 2 6 0" /></Ic></Cell>
        <Cell $g={5}><Ic w={14} sw={1.300} c="#fff"><rect x="1" y="3.500" width="11" height="7.500" /><path d="M13 5.500v3.500" /><path d="M3 5.500h3v3.500H3z" fill="#fff" stroke="none" /></Ic></Cell>
        <Cell $g={5}><Ic w={14} sw={1.200} c="#dfe3e6"><path d="M2 13A10 10 0 0 1 12.500 2.500M5 13a7.500 7.500 0 0 1 7.500-7.300M8 13a4.500 4.500 0 0 1 4.500-4.300" /><circle cx="11.500" cy="12" r="1.200" fill="#fff" stroke="none" /></Ic></Cell>
        <Cell $g={3}><Ic w={16} sw={1.200} c="#fff"><path d="M1.500 6h2.500l3-3v10l-3-3H1.500zM9 6q1.500 2 0 4M11 4.500q2.500 3.500 0 7M13 3q3.500 5 0 10" /></Ic></Cell>
        <Clock>
          <Label $s={11.300} $ls={-0.5} $c="#f2f4f5">11:19 PM</Label>
          <Label $s={11.300} $ls={-0.5} $c="#f2f4f5">8/27/2023</Label>
        </Clock>
        <Cell $g={13} $w={24}>
          <svg width="24" height="26" viewBox="0 0 24 26"><path d="M1 3h15v13H8l-3 3v-3H1z" fill="#f4f5f6" /><path d="M4 6.500h9M4 9.500h9M4 12.500h6" stroke="#1b2a42" strokeWidth="1.200" /><circle cx="16" cy="18" r="7" fill="#3d4852" stroke="#8c959c" /><text x="16" y="22" textAnchor="middle" fontFamily={ARIAL} fontSize="11" fontWeight="700" fill="#fff">2</text></svg>
        </Cell>
        <Cell $w={9} />
      </Taskbar>

      <Watermark>
        <svg width="242" height="26" viewBox="518 3 242 26">
          <g fontFamily={`"DejaVu Sans", sans-serif`} fontWeight="700" fill="#fff" stroke="#4a5f4d" strokeWidth="3" strokeLinejoin="round" paintOrder="stroke">
            <text x="524" y="21.500" fontSize="15.500" textLength="54" lengthAdjust="spacingAndGlyphs">WWW.</text>
            <text x="579" y="21.500" fontSize="18.500" textLength="125" lengthAdjust="spacingAndGlyphs">BANDICAM</text>
            <text x="705" y="21.500" fontSize="15" textLength="48" lengthAdjust="spacingAndGlyphs">.COM</text>
          </g>
        </svg>
      </Watermark>
    </Screen>
  );
}
